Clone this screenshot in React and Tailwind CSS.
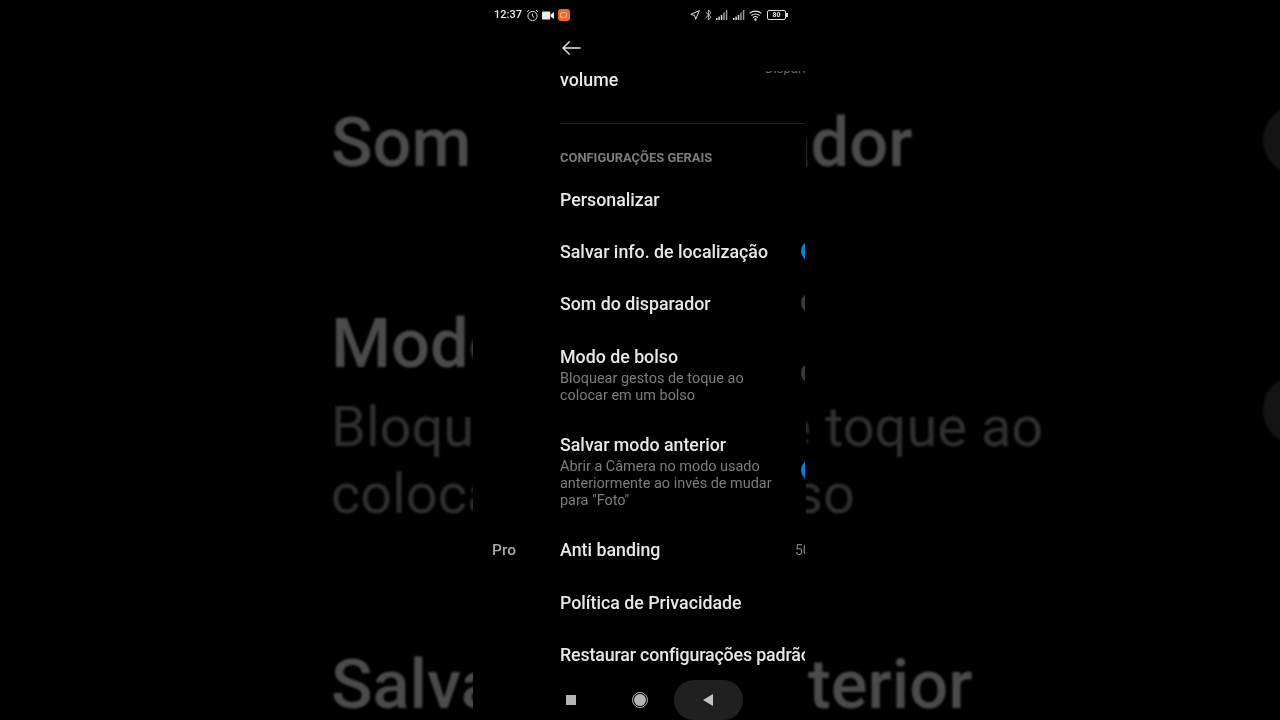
import React from 'react';

const Alarm = () => (
  <svg width="13" height="13" viewBox="0 0 13 13" fill="none" stroke="#d8d8d8" strokeWidth="1">
    <circle cx="6.5" cy="7" r="4.6" />
    <path d="M6.5 4.6v2.6l1.6 1.1M1 2.9 3 1M12 2.9 10 1" />
  </svg>
);

const Camera = () => (
  <svg width="12" height="9" viewBox="0 0 12 9" fill="#ececec">
    <rect x="0" y="0.5" width="8.2" height="8" rx="0.8" />
    <path d="M8.6 3.4 12 1v7L8.6 5.6z" />
  </svg>
);

const AppIcon = () => (
  <div className="w-[12px] h-[12px] rounded-[3px] bg-[#ee6a2a] flex items-center justify-center">
    <div className="w-[7px] h-[6px] rounded-[2px] border border-[#ffb98f]" />
  </div>
);

const Location = () => (
  <svg width="10" height="10" viewBox="0 0 10 10" fill="none" stroke="#dcdcdc" strokeWidth="1">
    <path d="M9.4.6 .8 4.4l3.8 1 1.1 3.9z" />
  </svg>
);

const Bluetooth = () => (
  <svg width="7" height="12" viewBox="0 0 7 12" fill="none" stroke="#d0d0d0" strokeWidth="0.9">
    <path d="M.7 3.2 6 8.2 3.4 11V1L6 3.8.7 8.8" />
  </svg>
);

const Signal = () => (
  <svg width="12" height="10" viewBox="0 0 12 10" fill="#d8d8d8">
    <rect x="0" y="8" width="1.5" height="2" />
    <rect x="2.4" y="6.6" width="1.5" height="3.4" />
    <rect x="4.8" y="5" width="1.5" height="5" />
    <rect x="7.2" y="2.5" width="1.5" height="7.5" fill="#9a9a9a" />
    <rect x="9.8" y="0" width="1.5" height="10" fill="#9a9a9a" />
  </svg>
);

const Wifi = () => (
  <svg width="13" height="11" viewBox="0 0 13 11" fill="none" stroke="#e6e6e6" strokeWidth="1.1">
    <path d="M.6 3.4c3.3-3 8.5-3 11.8 0M2.4 5.5c2.3-2 5.9-2 8.2 0M4.2 7.5c1.2-1 3.4-1 4.6 0" />
    <circle cx="6.5" cy="9.4" r="0.7" fill="#e6e6e6" />
  </svg>
);

const Battery = () => (
  <div className="flex items-center">
    <div className="w-[19px] h-[10px] rounded-[2px] border border-[#dcdcdc] flex items-center justify-center">
      <span className="text-[7px] leading-none font-bold text-[#dcdcdc]">80</span>
    </div>
    <div className="w-[2px] h-[4px] bg-[#dcdcdc]" />
  </div>
);

const StatusBar = () => (
  <div className="h-[30px] pl-[21px] pr-[18px] flex items-center justify-between">
    <div className="flex items-center">
      <span className="text-[11px] font-medium text-[#e8e8e8] mr-[4px]">12:37</span>
      <Alarm />
      <div className="ml-[3px]"><Camera /></div>
      <div className="ml-[4px]"><AppIcon /></div>
    </div>
    <div className="flex items-center gap-[4.6px]">
      <Location />
      <Bluetooth />
      <Signal />
      <Signal />
      <Wifi />
      <Battery />
    </div>
  </div>
);

const Toggle = ({ on }) => (
  <div className={`absolute left-[241px] top-[calc(50%-1.5px)] -translate-y-1/2 w-[21px] h-[21px] rounded-full ${on ? 'bg-[#0a80d8]' : 'bg-[#3a3a3a]'}`} />
);

const Row = ({ title, height, lines, toggle, value, tight }) => (
  <div className={`relative flex flex-col justify-center ${height}`}>
    <div className={`text-[17.8px] leading-[24px] font-medium text-[#e8e8e8] whitespace-nowrap ${lines ? 'mb-[1px]' : ''} ${tight ? 'tracking-[-0.14px]' : ''}`}>{title}</div>
    {lines && lines.map((line) => (
      <div key={line} className="text-[14.45px] leading-[17px] text-[#7d7d7d] whitespace-nowrap">{line}</div>
    ))}
    {toggle && <Toggle on={toggle === 'on'} />}
    {value && <span className="absolute left-[235px] top-1/2 -translate-y-1/2 text-[14px] text-[#7d7d7d]">{value}</span>}
  </div>
);

const GhostLine = ({ children, className }) => (
  <div className={`absolute left-[331px] whitespace-nowrap ${className}`}>{children}</div>
);

export default function App() {
  return (
    <div className="relative w-[1280px] h-[720px] bg-black overflow-hidden font-['Roboto',sans-serif]">
      {/* blurred copy of the video behind the phone */}
      <div className="absolute inset-0 blur-[0.8px]">
        <GhostLine className="top-[103px] text-[68.7px] leading-[80px] font-medium text-[#4b4b4b]">Som do disparador</GhostLine>
        <GhostLine className="top-[304px] text-[68.7px] leading-[80px] font-medium text-[#4b4b4b]">Modo de bolso</GhostLine>
        <GhostLine className="top-[394px] text-[56px] leading-[67px] text-[#2f2f2f]">Bloquear gestos de toque ao</GhostLine>
        <GhostLine className="top-[461px] text-[56px] leading-[67px] text-[#2f2f2f]">colocar em um bolso</GhostLine>
        <GhostLine className="top-[645px] text-[68.7px] leading-[80px] font-medium text-[#4b4b4b]">Salvar modo anterior</GhostLine>
        <div className="absolute left-[1263px] top-[105px] w-[70px] h-[70px] rounded-full bg-[#141414]" />
        <div className="absolute left-[1263px] top-[375px] w-[70px] h-[70px] rounded-full bg-[#141414]" />
      </div>

      <div className="relative ml-[473px] w-[333px] h-[720px] bg-black overflow-hidden blur-[0.3px]">
        <StatusBar />
        <div className="absolute left-[19px] top-[540px] text-[15.5px] leading-[20px] font-medium text-[#a8a8a8]">Pro</div>

        <div className="ml-[87px] w-[245px] overflow-hidden">
          <div className="h-[36px] flex items-center">
            <svg width="21" height="16" viewBox="0 0 21 16" fill="none" stroke="#e4e4e4" strokeWidth="1.4" className="ml-[1px]">
              <path d="M19.5 8H2M8.6 1.6 2 8l6.6 6.4" />
            </svg>
          </div>
          <div className="relative h-[58px] border-b border-[#1f1f1f]">
            <div className="absolute left-[205px] top-[5px] h-[4px] overflow-hidden">
              <span className="block -mt-[9px] text-[13px] leading-[14px] text-[#6a6a6a]">Disparo</span>
            </div>
            <div className="text-[17.8px] leading-[24px] font-medium text-[#e8e8e8] pt-[2px]">volume</div>
          </div>
          <div className="pt-[26px] text-[12.95px] leading-[16px] font-bold text-[#7c7c7c] whitespace-nowrap">CONFIGURAÇÕES GERAIS</div>
          <div className="mt-[8px]">
            <Row title="Personalizar" height="h-[52px]" />
            <Row title="Salvar info. de localização" height="h-[52px]" toggle="on" />
            <Row title="Som do disparador" height="h-[52px]" toggle="off" />
            <Row title="Modo de bolso" height="h-[88px]" toggle="off" lines={['Bloquear gestos de toque ao', 'colocar em um bolso']} />
            <Row title="Salvar modo anterior" height="h-[106px]" toggle="on" lines={['Abrir a Câmera no modo usado', 'anteriormente ao invés de mudar', 'para "Foto"']} />
            <Row title="Anti banding" height="h-[52px]" value="50" />
            <Row title="Política de Privacidade" height="h-[53px]" />
            <Row title="Restaurar configurações padrão" height="h-[52px]" tight />
          </div>
        </div>

        <div className="absolute left-0 bottom-0 w-full h-[40px] bg-black flex items-center">
          <div className="ml-[93px] w-[10px] h-[10px] bg-[#b4b4b4]" />
          <div className="ml-[56px] w-[16px] h-[16px] rounded-full border border-[#b4b4b4] flex items-center justify-center">
            <div className="w-[12px] h-[12px] rounded-full bg-[#b4b4b4]" />
          </div>
          <div className="ml-[26px] w-[69px] h-[40px] rounded-full bg-[#202020] flex items-center justify-center pr-[2px]">
            <div className="w-0 h-0 border-y-[6px] border-y-transparent border-r-[10px] border-r-[#c4c4c4]" />
          </div>
        </div>
      </div>
    </div>
  );
}
